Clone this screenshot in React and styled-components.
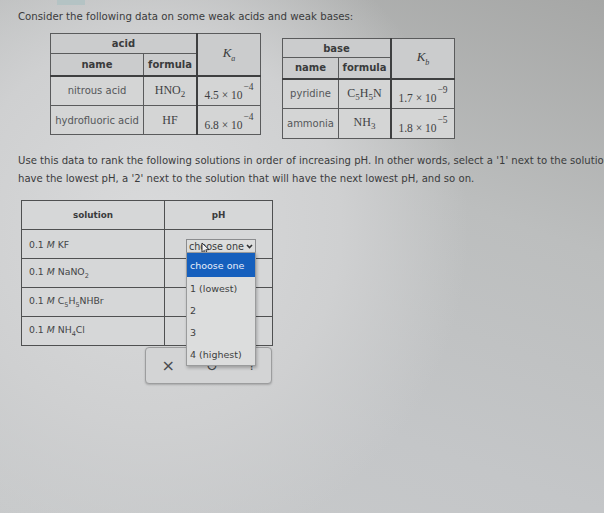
import { styled, createGlobalStyle } from "styled-components";

const GlobalStyle = createGlobalStyle`
  html, body {
    margin: 0;
    padding: 0;
  }
  body {
    width: 604px;
    height: 513px;
    overflow: hidden;
    font-family: "DejaVu Sans", Verdana, sans-serif;
    color: #3a3b3c;
    background:
      radial-gradient(ellipse 70% 85% at 25% 45%, #d9dadb 0%, #cfd0d1 45%, rgba(200, 202, 203, 0) 75%),
      linear-gradient(200deg, #a6a7a6 0%, #bcbebe 35%, #c4c6c8 70%, #c8cacb 100%);
  }
`;

const Page = styled.div`
  position: relative;
  padding-left: 18px;
`;

const TopTab = styled.div`
  width: 28px;
  height: 5px;
  margin-left: 39px;
  background: #b4c3c4;
`;

const Intro = styled.p`
  margin: 6px 0 0;
  font-size: 10.2px;
  line-height: 12px;
`;

const TablesRow = styled.div`
  display: flex;
  align-items: flex-start;
  margin-top: 10px;
  margin-left: 32px;
  gap: 21px;
`;

const DataTable = styled.table`
  border-collapse: collapse;
  margin-top: ${(p) => p.$offset || 0}px;
  background: #d4d5d5;

  td, th {
    border: 1px solid #5a5b5c;
    padding: 0 3px;
    text-align: center;
    white-space: nowrap;
  }
`;

const Row = styled.tr`
  height: ${(p) => p.$h}px;
`;

const HeadCell = styled.th`
  width: ${(p) => (p.$w ? `${p.$w}px` : "auto")};
  font-size: 10px;
  font-weight: bold;
  background: #cbcccd;
  color: #3a3b3c;
  border-bottom: ${(p) => (p.$divider ? "2px solid #3e3f40 !important" : "1px solid #5a5b5c")};
`;

const NameCell = styled.td`
  font-size: 10px;
  color: #55575a;
`;

const FormulaCell = styled.td`
  font-family: "Liberation Serif", "Times New Roman", serif;
  font-size: 12px;
  color: #404143;

  sub {
    font-size: 9px;
  }
`;

const ValueCell = styled.td`
  font-family: "Liberation Serif", "Times New Roman", serif;
  font-size: 11.5px;
  color: #404143;
  border-left: 2px solid #3e3f40 !important;
  padding-top: 6px !important;

  sup {
    font-size: 9.5px;
    position: relative;
    top: -4px;
    margin-left: 1px;
  }
`;

const ConstHead = styled.th`
  width: 56px;
  font-family: "Liberation Serif", "Times New Roman", serif;
  font-style: italic;
  font-weight: normal;
  font-size: 13px;
  background: #cbcccd;
  color: #3a3b3c;
  border-left: 2px solid #3e3f40 !important;
  border-bottom: 2px solid #3e3f40 !important;

  sub {
    font-size: 8px;
  }
`;

const Instructions = styled.p`
  margin: 13px 0 0;
  font-size: 10.1px;
  line-height: 18px;
  white-space: nowrap;
`;

const RankTable = styled.table`
  border-collapse: collapse;
  margin-top: 12px;
  margin-left: 3px;
  background: #d6d7d8;

  td, th {
    border: 1px solid #4f5051;
    padding: 0;
  }
  th {
    font-size: 8.8px;
    font-weight: bold;
    height: 28px;
    color: #3a3b3c;
  }
  td {
    height: 28px;
    font-size: 9.3px;
    color: #444547;
  }
  sub {
    font-size: 6.5px;
  }
  em {
    font-style: italic;
  }
`;

const SolutionCell = styled.td`
  width: 135px;
  padding-left: 7px !important;
`;

const PhCell = styled.td`
  width: 107px;
  position: relative;
  vertical-align: top;
`;

const Select = styled.div`
  position: absolute;
  left: 21px;
  top: 9px;
  width: 70px;
  height: 13px;
  border: 1px solid #8b8c8e;
  border-bottom: none;
  background: #dcdddd;
  display: flex;
  align-items: center;
  justify-content: space-between;
  padding: 0 2px;
  box-sizing: border-box;
  font-size: 9.6px;
  color: #3a3b3c;
  z-index: 3;
`;

const Menu = styled.div`
  position: absolute;
  left: 21px;
  top: 22px;
  width: 70px;
  border: 1px solid #9a9b9c;
  background: #dcdddd;
  box-shadow: 1px 2px 3px rgba(0, 0, 0, 0.25);
  box-sizing: border-box;
  z-index: 3;
`;

const Option = styled.div`
  height: ${(p) => (p.$active ? 24 : 22)}px;
  display: flex;
  align-items: center;
  padding-left: 3px;
  font-size: 9.5px;
  color: ${(p) => (p.$active ? "#e8eefa" : "#3e3f41")};
  background: ${(p) => (p.$active ? "#155fbd" : "transparent")};
`;

const Cursor = styled.svg`
  position: absolute;
  left: 14px;
  top: 2px;
`;

const ToolPanel = styled.div`
  display: flex;
  align-items: center;
  justify-content: space-around;
  width: 127px;
  height: 37px;
  margin-left: 127px;
  margin-top: 1px;
  box-sizing: border-box;
  border: 1px solid #9c9d9e;
  border-radius: 4px;
  background: #d3d4d5;
  box-shadow: 0 1px 2px rgba(0, 0, 0, 0.2);
  color: #4a4c4f;
`;

const ToolIcon = styled.span`
  font-size: ${(p) => p.$size || 14}px;
  line-height: 1;
`;

function Chevron() {
  return (
    <svg width="7" height="5" viewBox="0 0 7 5">
      <path d="M1 1 L3.5 3.6 L6 1" fill="none" stroke="#2f3032" strokeWidth="1.5" />
    </svg>
  );
}

function Pointer() {
  return (
    <Cursor width="9" height="13" viewBox="0 0 9 13">
      <path d="M1 1 L1 10.5 L3.3 8.4 L5 12 L6.4 11.3 L4.8 7.8 L8 7.6 Z" fill="#f4f4f4" stroke="#222" strokeWidth="0.9" />
    </Cursor>
  );
}

const acids = [
  { id: "hno2", name: "nitrous acid", formula: (<>HNO<sub>2</sub></>), value: "4.5", exp: "−4", h: 30 },
  { id: "hf", name: "hydrofluoric acid", formula: "HF", value: "6.8", exp: "−4", h: 29 },
];

const bases = [
  { id: "pyr", name: "pyridine", formula: (<>C<sub>5</sub>H<sub>5</sub>N</>), value: "1.7", exp: "−9", h: 30 },
  { id: "nh3", name: "ammonia", formula: (<>NH<sub>3</sub></>), value: "1.8", exp: "−5", h: 30 },
];

const rows = [
  { id: "kf", label: (<>0.1 <em>M</em> KF</>) },
  { id: "nano2", label: (<>0.1 <em>M</em> NaNO<sub>2</sub></>) },
  { id: "pyr", label: (<>0.1 <em>M</em> C<sub>5</sub>H<sub>5</sub>NHBr</>) },
  { id: "nh4", label: (<>0.1 <em>M</em> NH<sub>4</sub>Cl</>) },
];

const options = ["choose one", "1 (lowest)", "2", "3", "4 (highest)"];

function ConstantTable({ title, symbol, items, nameW, formulaW, offset, headH }) {
  return (
    <DataTable $offset={offset}>
      <tbody>
        <Row $h={headH[0]}>
          <HeadCell colSpan={2}>{title}</HeadCell>
          <ConstHead rowSpan={2}>
            K<sub>{symbol}</sub>
          </ConstHead>
        </Row>
        <Row $h={headH[1]}>
          <HeadCell $w={nameW} $divider>name</HeadCell>
          <HeadCell $w={formulaW} $divider>formula</HeadCell>
        </Row>
        {items.map((it) => (
          <Row key={it.id} $h={it.h}>
            <NameCell>{it.name}</NameCell>
            <FormulaCell>{it.formula}</FormulaCell>
            <ValueCell>
              {it.value} × 10<sup>{it.exp}</sup>
            </ValueCell>
          </Row>
        ))}
      </tbody>
    </DataTable>
  );
}

export default function App() {
  return (
    <>
      <GlobalStyle />
      <Page>
        <TopTab />
        <Intro>Consider the following data on some weak acids and weak bases:</Intro>

        <TablesRow>
          <ConstantTable title="acid" symbol="a" items={acids} nameW={86} formulaW={46} offset={0} headH={[20, 22]} />
          <ConstantTable title="base" symbol="b" items={bases} nameW={49} formulaW={45} offset={5} headH={[19, 21]} />
        </TablesRow>

        <Instructions>
          Use this data to rank the following solutions in order of increasing pH. In other words, select a '1' next to the solution that will
          <br />
          have the lowest pH, a '2' next to the solution that will have the next lowest pH, and so on.
        </Instructions>

        <RankTable>
          <tbody>
            <tr>
              <th>solution</th>
              <th>pH</th>
            </tr>
            {rows.map((row, i) => (
              <tr key={row.id}>
                <SolutionCell>{row.label}</SolutionCell>
                <PhCell>
                  {i === 0 && (
                    <>
                      <Select>
                        <span>choose one</span>
                        <Chevron />
                        <Pointer />
                      </Select>
                      <Menu>
                        {options.map((o, k) => (
                          <Option key={o} $active={k === 0}>
                            {o}
                          </Option>
                        ))}
                      </Menu>
                    </>
                  )}
                </PhCell>
              </tr>
            ))}
          </tbody>
        </RankTable>

        <ToolPanel>
          <ToolIcon $size={16}>×</ToolIcon>
          <ToolIcon $size={14}>↺</ToolIcon>
          <ToolIcon $size={13}>?</ToolIcon>
        </ToolPanel>
      </Page>
    </>
  );
}
